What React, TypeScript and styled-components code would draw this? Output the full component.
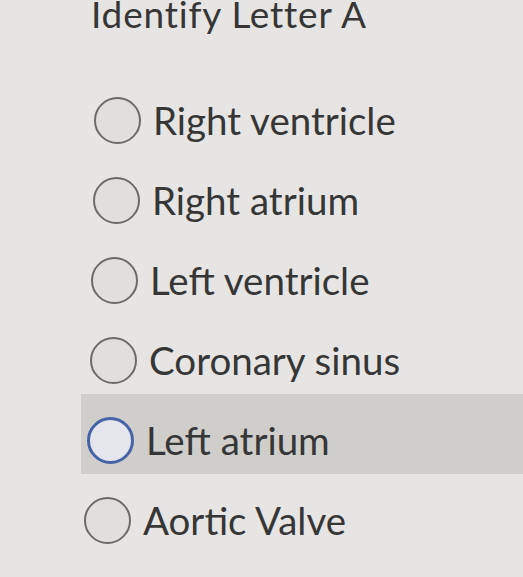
import styled, { createGlobalStyle } from "styled-components";

const GlobalStyle = createGlobalStyle`
  html, body {
    margin: 0;
    padding: 0;
    background: #e6e5e3;
  }
  body {
    font-family: Lato, "Liberation Sans", sans-serif;
    color: #363636;
  }
`;

const options = [
  { label: "Right ventricle", indent: 13 },
  { label: "Right atrium", indent: 12 },
  { label: "Left ventricle", indent: 10 },
  { label: "Coronary sinus", indent: 9 },
  { label: "Left atrium", indent: 6, selected: true },
  { label: "Aortic Valve", indent: 3 },
];

export default function App() {
  return (
    <>
      <GlobalStyle />
      <StyledQuestion>
        <StyledTitle>Identify Letter A</StyledTitle>
        <StyledOptions>
          {options.map((o) => (
            <StyledRow key={o.label} $indent={o.indent} $selected={!!o.selected}>
              <StyledRadio $selected={!!o.selected} />
              <StyledLabel>{o.label}</StyledLabel>
            </StyledRow>
          ))}
        </StyledOptions>
      </StyledQuestion>
    </>
  );
}

const StyledQuestion = styled.div`
  width: 523px;
  height: 577px;
  overflow: hidden;
`;

const StyledTitle = styled.h1`
  margin: 0;
  padding: 0 0 0 91px;
  font-size: 37px;
  font-weight: 400;
  line-height: 28px;
  letter-spacing: 0.8px;
  height: 74px;
`;

const StyledOptions = styled.div`
  display: flex;
  flex-direction: column;
  margin-left: 81px;
`;

const StyledRow = styled.div<{ $indent: number; $selected: boolean }>`
  display: flex;
  align-items: center;
  gap: 12px;
  height: 80px;
  box-sizing: border-box;
  padding-top: 12px;
  padding-left: ${({ $indent }) => `${$indent}px`};
  background: ${({ $selected }) => ($selected ? "#cfcecb" : "transparent")};
`;

const StyledRadio = styled.span<{ $selected: boolean }>`
  width: 47px;
  height: 47px;
  box-sizing: border-box;
  border-radius: 50%;
  flex-shrink: 0;
  border: ${({ $selected }) => ($selected ? "3px solid #4563a6" : "2px solid #6b6b6b")};
  background: ${({ $selected }) => ($selected ? "#e4e6ec" : "#e0dfdd")};
`;

const StyledLabel = styled.span`
  font-size: 38.5px;
  line-height: 1;
`;
